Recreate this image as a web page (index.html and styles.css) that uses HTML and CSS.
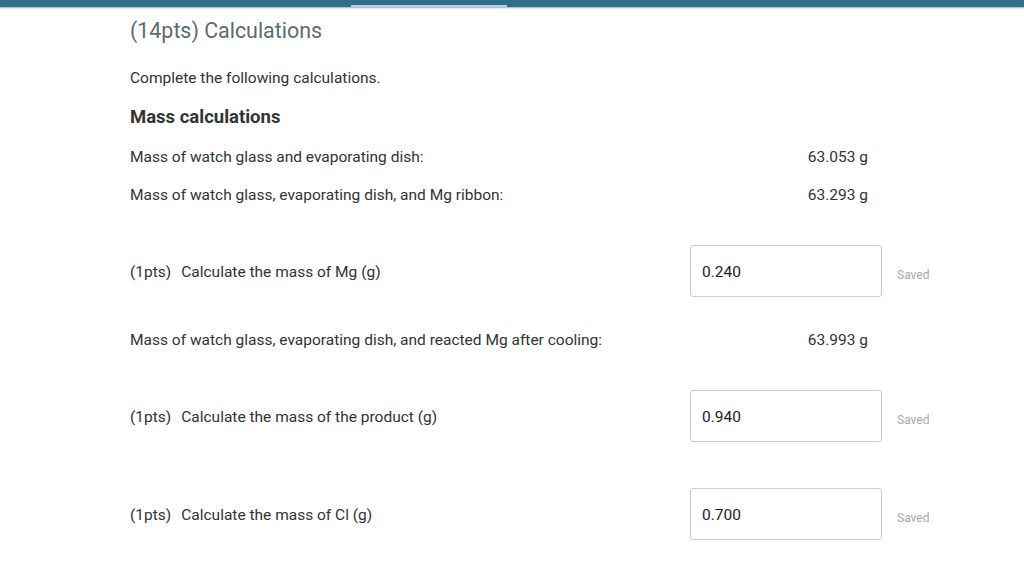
FILE: index.html
```html
<!DOCTYPE html>
<html>
<head>
<meta charset="utf-8">
<link rel="stylesheet" href="styles.css">
</head>
<body>
<header class="topbar"><div class="tab-indicator"></div></header>
<main class="content">
  <h1 class="title">(14pts) Calculations</h1>
  <p class="intro">Complete the following calculations.</p>
  <h2 class="section">Mass calculations</h2>
  <div class="row row-first"><span class="label">Mass of watch glass and evaporating dish:</span><span class="value">63.053 g</span><span class="status"></span></div>
  <div class="row row-next"><span class="label">Mass of watch glass, evaporating dish, and Mg ribbon:</span><span class="value">63.293 g</span><span class="status"></span></div>
  <div class="row qrow q1"><span class="label"><span class="pts">(1pts)</span>Calculate the mass of Mg (g)</span><div class="answer">0.240</div><span class="status">Saved</span></div>
  <div class="row row-after"><span class="label">Mass of watch glass, evaporating dish, and reacted Mg after cooling:</span><span class="value">63.993 g</span><span class="status"></span></div>
  <div class="row qrow q2"><span class="label"><span class="pts">(1pts)</span>Calculate the mass of the product (g)</span><div class="answer">0.940</div><span class="status">Saved</span></div>
  <div class="row qrow q3"><span class="label"><span class="pts">(1pts)</span>Calculate the mass of Cl (g)</span><div class="answer">0.700</div><span class="status">Saved</span></div>
</main>
</body>
</html>
```
FILE: styles.css
```css
html, body { margin: 0; padding: 0; background: #fff; }
body {
  font-family: Roboto, "Noto Sans", "Liberation Sans", sans-serif;
  color: #333;
  width: 1024px;
  height: 563px;
  overflow: hidden;
}
.topbar {
  position: relative;
  height: 7px;
  background: #2f6f8a;
  box-shadow: 0 1px 2px rgba(0,0,0,0.35);
  z-index: 2;
}
.tab-indicator {
  position: absolute;
  left: 351px;
  top: 5px;
  width: 156px;
  height: 2px;
  background: #a9d6ee;
}
.content {
  margin-left: 130px;
  width: 810px;
}
.title {
  margin: 10px 0 0;
  font-size: 21.4px;
  line-height: 28px;
  font-weight: 400;
  color: #5d6b70;
}
.intro {
  margin: 21px 0 0;
  font-size: 15.5px;
  line-height: 24px;
  color: #333;
}
.section {
  margin: 15px 0 0;
  font-size: 18.5px;
  line-height: 24px;
  font-weight: 700;
  color: #333;
}
.row {
  display: flex;
  align-items: center;
  font-size: 15.5px;
  line-height: 24px;
  color: #333;
}
.row-first { margin-top: 16px; }
.row-next { margin-top: 14px; }
.q1 { margin-top: 38px; }
.row-after { margin-top: 31px; }
.q2 { margin-top: 38px; }
.q3 { margin-top: 46px; }
.label { flex: 1; }
.qrow .label { padding-top: 2px; }
.pts { margin-right: 10px; }
.value {
  width: 178px;
  padding-right: 14px;
  text-align: right;
}
.answer {
  box-sizing: border-box;
  width: 192px;
  height: 52px;
  border: 1px solid #cbcbcb;
  border-radius: 3px;
  padding-left: 11px;
  padding-top: 2px;
  display: flex;
  align-items: center;
  color: #222;
}
.status {
  width: 58px;
  padding-left: 15px;
  font-size: 12px;
  color: #a9a9a9;
  box-sizing: border-box;
  padding-top: 7px;
}
```
